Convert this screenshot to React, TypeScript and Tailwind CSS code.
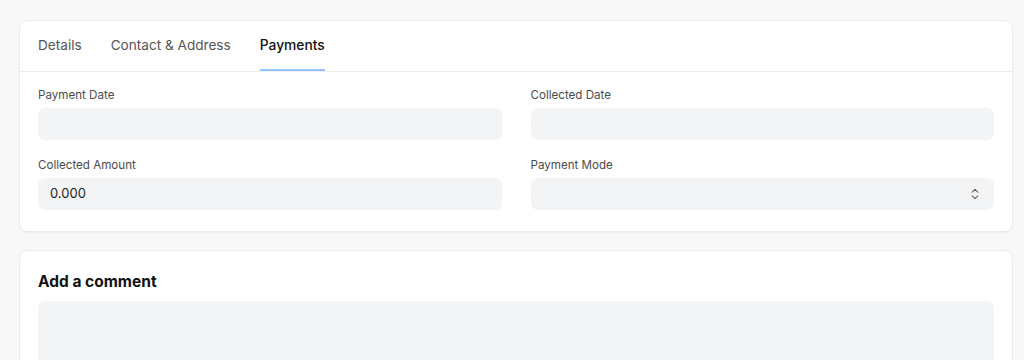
import { ChevronsUpDown } from "lucide-react";

const tabs = ["Details", "Contact & Address", "Payments"];

function Field({ label, value, select }: { label: string; value?: string; select?: boolean }) {
  return (
    <div className="flex flex-col">
      <label className="mb-[5px] text-[11.6px] leading-4 text-[#4b4b4b]">{label}</label>
      <div className="flex h-[32px] items-center justify-between rounded-[7px] bg-[#f3f4f5] px-3 text-[13px] text-[#1f1f1f]">
        <span>{value}</span>
        {select ? <ChevronsUpDown className="h-[14px] w-[14px] text-[#555]" strokeWidth={1.8} /> : null}
      </div>
    </div>
  );
}

export default function App() {
  return (
    <div
      className="h-[360px] overflow-hidden bg-[#f8f8f8] pl-[19px] pr-[11px] pt-[20px]"
      style={{ fontFamily: "Inter, 'Noto Sans', sans-serif" }}
    >
      <div className="rounded-[8px] border border-[#ececec] bg-white shadow-[0_1px_2px_rgba(0,0,0,0.04)]">
        <div className="flex h-[51px] gap-[29px] border-b border-[#eeeeee] px-[18px]">
          {tabs.map((t) => {
            const active = t === "Payments";
            return (
              <div
                key={t}
                className={`flex items-center border-b-2 text-[13.6px] ${
                  active ? "border-[#93c5fd] text-[13.8px] font-medium text-[#111]" : "border-transparent text-[#555]"
                }`}
              >
                {t}
              </div>
            );
          })}
        </div>
        <div className="grid grid-cols-2 gap-x-[29px] gap-y-[17px] px-[18px] pb-[21px] pt-[15px]">
          <Field label="Payment Date" />
          <Field label="Collected Date" />
          <Field label="Collected Amount" value="0.000" />
          <Field label="Payment Mode" select />
        </div>
      </div>

      <div className="mt-[18px] rounded-[8px] border border-[#ececec] bg-white px-[18px] pt-[19px] pb-5">
        <h3 className="text-[15.5px] font-bold leading-6 text-[#111]">Add a comment</h3>
        <div className="mt-[7px] h-[80px] rounded-[7px] bg-[#f3f4f5]" />
      </div>
    </div>
  );
}
